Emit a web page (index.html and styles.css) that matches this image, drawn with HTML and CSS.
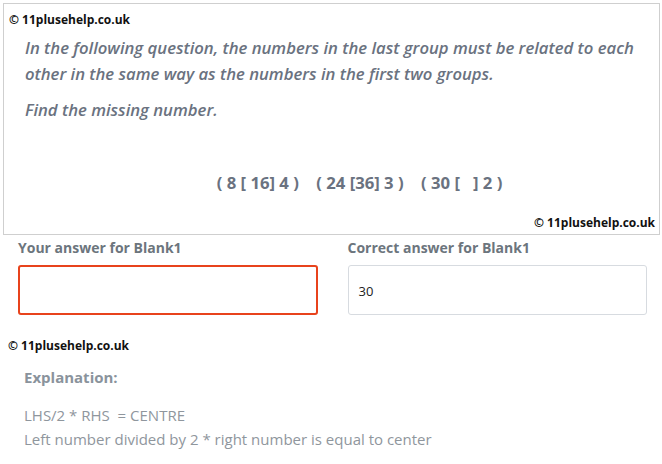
FILE: index.html
```html
<!DOCTYPE html>
<html>
<head>
<meta charset="utf-8">
<link rel="stylesheet" href="styles.css">
</head>
<body>
<div class="qbox">
  <div class="wm">© 11plusehelp.co.uk</div>
  <p class="qtext">In the following question, the numbers in the last group must be related to each other in the same way as the numbers in the first two groups.</p>
  <p class="qtext find">Find the missing number.</p>
  <div class="groups">( 8 [ 16] 4 ) &nbsp;&nbsp; ( 24 [36] 3 ) &nbsp;&nbsp; ( 30 [ &nbsp; ] 2 )</div>
  <div class="wm right">© 11plusehelp.co.uk</div>
</div>
<div class="answers">
  <div class="col">
    <div class="label">Your answer for Blank1</div>
    <div class="field wrong"></div>
  </div>
  <div class="col">
    <div class="label">Correct answer for Blank1</div>
    <div class="field">30</div>
  </div>
</div>
<div class="wm bottom">© 11plusehelp.co.uk</div>
<div class="explain">
  <div class="ehead">Explanation:</div>
  <div class="eline">LHS/2 * RHS &nbsp;= CENTRE</div>
  <div class="eline">Left number divided by 2 * right number is equal to center</div>
</div>
</body>
</html>
```
FILE: styles.css
```css
html, body { margin: 0; padding: 0; background: #fff; }
body { font-family: "Open Sans", "Liberation Sans", sans-serif; width: 662px; height: 464px; overflow: hidden; }
.qbox {
  margin: 3px 2px 0 3px;
  height: 232px;
  border: 1px solid #cfcfcf;
  position: relative;
  box-sizing: border-box;
}
.wm { font-size: 12px; font-weight: 700; color: #111; line-height: 16px; }
.qbox > .wm:first-child { padding: 8px 0 0 5px; }
.qtext {
  margin: 0 0 0 21px;
  padding-right: 10px;
  font-size: 16.7px;
  font-style: italic;
  font-weight: 600;
  color: #6a7280;
  line-height: 26px;
}
.qtext:first-of-type { margin-top: 7px; }
.find { margin-top: 10px; }
.groups {
  text-align: center;
  font-size: 16.7px;
  font-weight: 700;
  color: #6a7280;
  margin-top: 49px;
  padding-left: 56px;
  line-height: 22px;
}
.wm.right { position: absolute; right: 4px; bottom: 3px; }
.answers { display: flex; padding: 0 15px 0 18px; gap: 30px; margin-top: 3px; }
.col { flex: 1; }
.label { font-size: 14px; font-weight: 700; color: #6c757d; line-height: 19px; margin-bottom: 8px; }
.field {
  height: 50px;
  box-sizing: border-box;
  border: 1px solid #d7dbe0;
  border-radius: 3px;
  font-size: 13px;
  color: #222;
  padding: 16px 10px;
  line-height: 18px;
}
.field.wrong { border: 2px solid #e8431c; }
.wm.bottom { padding: 23px 0 0 8px; }
.explain { padding: 0 0 0 24px; color: #8f969d; }
.ehead { font-size: 15px; font-weight: 700; margin-top: 13px; color: #8a939c; line-height: 20px; }
.eline { font-size: 15px; line-height: 24px; }
.ehead + .eline { margin-top: 16px; }
```
